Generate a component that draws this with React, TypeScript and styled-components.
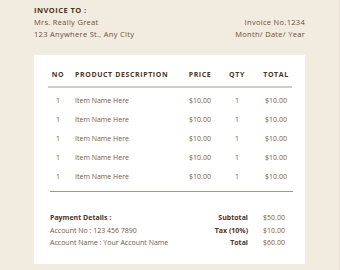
import React from 'react'
import styled, { createGlobalStyle } from 'styled-components'

const GlobalStyle = createGlobalStyle`
	html, body {
		margin: 0;
		padding: 0;
		background: #f2ebe0;
	}
	body {
		font-family: "Open Sans", "Liberation Sans", sans-serif;
		color: #6e4e35;
	}
`

const Page = styled.div`
	width: 340px;
	height: 270px;
	box-sizing: border-box;
	padding: 4px 34px 0 34px;
	border-right: 1px solid #e6ddcf;
`

const Header = styled.div`
	display: flex;
	justify-content: space-between;
	align-items: flex-start;
	height: 51px;
`

const Col = styled.div<{ $right?: boolean }>`
	display: flex;
	flex-direction: column;
	align-items: ${p => (p.$right ? 'flex-end' : 'flex-start')};
	padding-top: ${p => (p.$right ? '12px' : '0')};
`

const Title = styled.div`
	font-size: 7.5px;
	line-height: 12px;
	font-weight: 700;
	letter-spacing: 0.45px;
	color: #4e3322;
`

const Line = styled.div`
	font-size: 7.5px;
	line-height: 12.2px;
	letter-spacing: 0.3px;
	color: #6e4e35;
`

const Card = styled.div`
	background: #ffffff;
	height: 209px;
	box-sizing: border-box;
	padding: 13px 13px 0 14px;
`

const Grid = styled.div`
	display: grid;
	grid-template-columns: 20px 117px 30px 44px 34px;
	align-items: center;
`

const HeadRow = styled(Grid)`
	height: 12px;
	padding-bottom: 6px;
	border-bottom: 2px solid #d2ccc2;
	margin-bottom: 3px;
`

const Th = styled.div<{ $left?: boolean }>`
	font-size: 7px;
	font-weight: 700;
	letter-spacing: 0.6px;
	color: #4e3322;
	white-space: nowrap;
	text-align: ${p => (p.$left ? 'left' : 'center')};
	padding-left: ${p => (p.$left ? '7px' : '0')};
`

const Row = styled(Grid)`
	height: 19px;
`

const Td = styled.div<{ $left?: boolean }>`
	font-size: 7px;
	color: #76573f;
	white-space: nowrap;
	text-align: ${p => (p.$left ? 'left' : 'center')};
	padding-left: ${p => (p.$left ? '7px' : '0')};
`

const Rule = styled.div`
	height: 1px;
	background: #a8977f;
	margin: 5px -1px 20px 2px;
`

const Footer = styled.div`
	display: grid;
	grid-template-columns: 1fr auto 34px;
	column-gap: 9px;
	padding-left: 2px;
	padding-right: 1px;
`

const FootText = styled.div<{ $bold?: boolean; $align?: string }>`
	font-size: 7px;
	line-height: 12.5px;
	white-space: nowrap;
	font-weight: ${p => (p.$bold ? 700 : 400)};
	color: ${p => (p.$bold ? '#4e3322' : '#76573f')};
	text-align: ${p => p.$align || 'left'};
`

const items = [1, 2, 3, 4, 5]

const totals = [
	{ left: 'Payment Details :', bold: true, label: 'Subtotal', value: '$50.00' },
	{ left: 'Account No : 123 456 7890', bold: false, label: 'Tax (10%)', value: '$10.00' },
	{ left: 'Account Name : Your Account Name', bold: false, label: 'Total', value: '$60.00' },
]

export default function App() {
	return (
		<>
			<GlobalStyle />
			<Page>
				<Header>
					<Col>
						<Title>INVOICE TO :</Title>
						<Line>Mrs. Really Great</Line>
						<Line>123 Anywhere St., Any City</Line>
					</Col>
					<Col $right>
						<Line>Invoice No.1234</Line>
						<Line>Month/ Date/ Year</Line>
					</Col>
				</Header>
				<Card>
					<HeadRow>
						<Th>NO</Th>
						<Th $left>PRODUCT DESCRIPTION</Th>
						<Th>PRICE</Th>
						<Th>QTY</Th>
						<Th>TOTAL</Th>
					</HeadRow>
					{items.map(i => (
						<Row key={i}>
							<Td>1</Td>
							<Td $left>Item Name Here</Td>
							<Td>$10.00</Td>
							<Td>1</Td>
							<Td>$10.00</Td>
						</Row>
					))}
					<Rule />
					<Footer>
						{totals.map(t => (
							<React.Fragment key={t.label}>
								<FootText $bold={t.bold}>{t.left}</FootText>
								<FootText $bold $align='right'>{t.label}</FootText>
								<FootText $align='center'>{t.value}</FootText>
							</React.Fragment>
						))}
					</Footer>
				</Card>
			</Page>
		</>
	)
}
